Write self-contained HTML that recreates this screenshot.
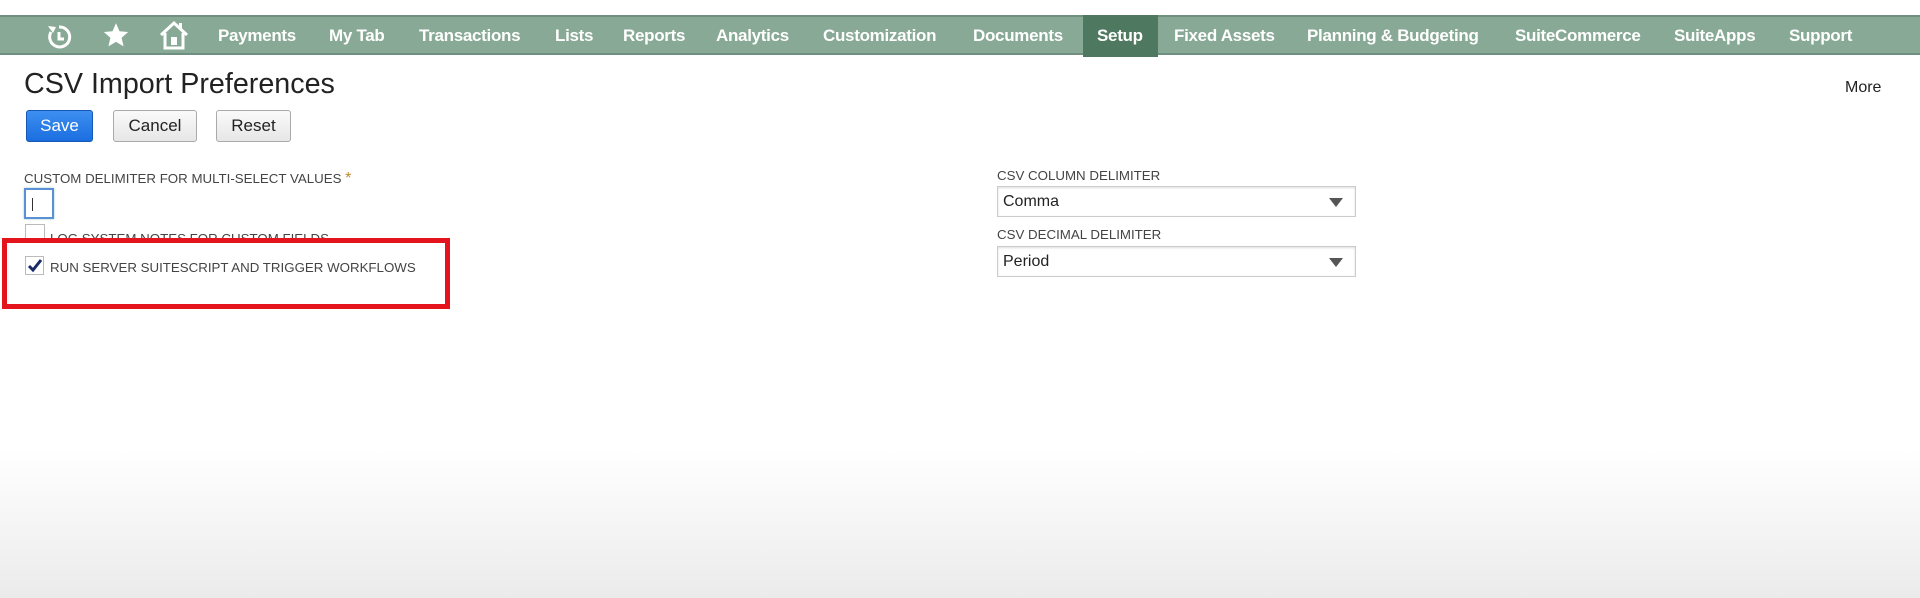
<!DOCTYPE html>
<html><head><meta charset="utf-8"><style>
*{margin:0;padding:0;box-sizing:border-box}
body{width:1920px;height:598px;overflow:hidden;font-family:"Liberation Sans",sans-serif;color:#333;position:relative;
background:linear-gradient(#fff 0,#fff 450px,#ebebeb 598px)}
.a{position:absolute;white-space:nowrap}
.nav{position:absolute;left:0;top:15px;width:1920px;height:40px;background:#87a995;border-top:2px solid #6f9080;border-bottom:2px solid #6f9080}
.nav .a{color:#fff;font-weight:bold;font-size:17px;top:9px;letter-spacing:-0.3px}
.setup{position:absolute;left:1083px;top:-2px;width:75px;height:42px;background:#4e7860}
.btn{position:absolute;top:110px;height:32px;border:1px solid #aaa;border-radius:3px;background:linear-gradient(#fafafa,#e6e6e6);font-size:17px;text-align:center;line-height:30px;color:#222}
.lbl{font-size:13.3px;color:#444}
.sel{position:absolute;left:997px;width:359px;height:31px;border:1px solid #ccc;box-shadow:inset 0 1px 2px #ddd;font-size:16px;line-height:29px;padding-left:5px;color:#222}
.sel:after{content:"";position:absolute;right:12px;top:11px;border-left:7px solid transparent;border-right:7px solid transparent;border-top:9px solid #555}
</style></head><body>
<div class="nav">
<div class="setup"></div>
<svg class="a" style="left:45px;top:5px" width="28" height="30" viewBox="0 0 28 30"><path d="M6 10 A10 10 0 1 0 14 5" fill="none" stroke="#fff" stroke-width="3"/><path d="M14 10v7h5" fill="none" stroke="#fff" stroke-width="3"/><path d="M3 4l5 7 3-6z" fill="#fff"/></svg>
<svg class="a" style="left:103px;top:5px" width="26" height="26" viewBox="0 0 24 24"><path d="M12 1l3.2 7.5 8 .7-6 5.3 1.8 8L12 18.3 5 22.5l1.8-8-6-5.3 8-.7z" fill="#fff"/></svg>
<svg class="a" style="left:158px;top:2px" width="32" height="32" viewBox="0 0 32 32"><path d="M3 16L16 4l13 12" fill="none" stroke="#fff" stroke-width="3"/><path d="M7 14v15h18V14" fill="none" stroke="#fff" stroke-width="3"/><rect x="13" y="18" width="6" height="8" fill="#fff"/><rect x="21" y="4" width="3" height="6" fill="#fff"/></svg>
<div class="a" style="left:218px">Payments</div>
<div class="a" style="left:329px">My Tab</div>
<div class="a" style="left:419px">Transactions</div>
<div class="a" style="left:555px">Lists</div>
<div class="a" style="left:623px">Reports</div>
<div class="a" style="left:716px">Analytics</div>
<div class="a" style="left:823px">Customization</div>
<div class="a" style="left:973px">Documents</div>
<div class="a" style="left:1097px">Setup</div>
<div class="a" style="left:1174px">Fixed Assets</div>
<div class="a" style="left:1307px">Planning &amp; Budgeting</div>
<div class="a" style="left:1515px">SuiteCommerce</div>
<div class="a" style="left:1674px">SuiteApps</div>
<div class="a" style="left:1789px">Support</div>
</div>
<div class="a" style="left:24px;top:68px;font-size:28.7px;color:#222">CSV Import Preferences</div>
<div class="a" style="left:1845px;top:79px;font-size:16px;color:#222">More</div>
<div class="btn" style="left:26px;width:67px;background:linear-gradient(#3d8ff0,#1a6ee0);border-color:#1457b5;color:#fff">Save</div>
<div class="btn" style="left:113px;width:84px">Cancel</div>
<div class="btn" style="left:216px;width:75px">Reset</div>
<div class="a lbl" style="left:24px;top:170px">CUSTOM DELIMITER FOR MULTI-SELECT VALUES <span style="color:#c08a2a;font-size:16px">*</span></div>
<div class="a" style="left:24px;top:188px;width:30px;height:31px;border:2px solid #5b8fd6;box-shadow:0 0 2px #9cc"><div style="position:absolute;left:6px;top:8px;width:1px;height:13px;background:#333"></div></div>
<div class="a" style="left:25px;top:224px;width:20px;height:14px;border:1px solid #bbb;border-bottom:none"></div>
<div class="a lbl" style="left:50px;top:230px;height:10px;overflow:hidden;line-height:17px">LOG SYSTEM NOTES FOR CUSTOM FIELDS</div>
<div class="a" style="left:2px;top:238px;width:448px;height:71px;border:5px solid #e3141c"></div>
<div class="a" style="left:25px;top:256px;width:19px;height:19px;border:1px solid #bbb;background:#fff"><svg width="17" height="17" viewBox="0 0 17 17"><path d="M3 9l4 4 8-10" fill="none" stroke="#1a2a6a" stroke-width="3"/></svg></div>
<div class="a lbl" style="left:50px;top:260px">RUN SERVER SUITESCRIPT AND TRIGGER WORKFLOWS</div>
<div class="a lbl" style="left:997px;top:168px">CSV COLUMN DELIMITER</div>
<div class="sel" style="top:186px">Comma</div>
<div class="a lbl" style="left:997px;top:227px">CSV DECIMAL DELIMITER</div>
<div class="sel" style="top:246px">Period</div>
</body></html>
